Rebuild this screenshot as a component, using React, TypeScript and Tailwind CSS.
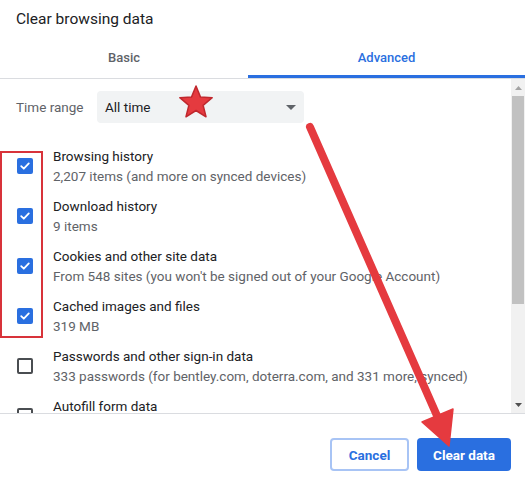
import React from "react";

type Item = { title: string; sub: string; checked: boolean };

const items: Item[] = [
  { title: "Browsing history", sub: "2,207 items (and more on synced devices)", checked: true },
  { title: "Download history", sub: "9 items", checked: true },
  { title: "Cookies and other site data", sub: "From 548 sites (you won't be signed out of your Google Account)", checked: true },
  { title: "Cached images and files", sub: "319 MB", checked: true },
  { title: "Passwords and other sign-in data", sub: "333 passwords (for bentley.com, doterra.com, and 331 more, synced)", checked: false },
  { title: "Autofill form data", sub: "\u00a0", checked: false },
];

function Checkbox({ checked }: { checked: boolean }) {
  if (checked) {
    return (
      <div className="w-[16px] h-[16px] rounded-[2px] bg-[#2a6fe0] flex items-center justify-center shrink-0">
        <svg width="12" height="12" viewBox="0 0 12 12">
          <path d="M2.2 6.2 L4.8 8.7 L9.8 3.4" fill="none" stroke="white" strokeWidth="1.8" strokeLinecap="round" strokeLinejoin="round" />
        </svg>
      </div>
    );
  }
  return <div className="w-[16px] h-[16px] rounded-[2px] border-2 border-[#4a4d51] shrink-0" />;
}

export default function App() {
  return (
    <div
      className="relative w-[525px] h-[479px] overflow-hidden bg-white"
      style={{ fontFamily: "Roboto, 'Liberation Sans', Arial, sans-serif" }}
    >
      {/* Title */}
      <div className="h-[40px] flex items-center pl-[16px] text-[15.5px] text-[#202124]">Clear browsing data</div>

      {/* Tabs */}
      <div className="flex h-[39px] border-b border-[#dadce0]">
        <div className="w-[248px] flex items-center justify-center text-[13px] font-medium text-[#5f6368] pb-[2px]">Basic</div>
        <div className="flex-1 flex items-center justify-center text-[13px] font-medium text-[#2a6fe0] border-b-[3px] border-[#2a6fe0] pt-[1px]">
          Advanced
        </div>
      </div>

      {/* Scroll area */}
      <div className="flex h-[335px] border-b border-[#dadce0]">
        <div className="flex-1 overflow-hidden">
          <div className="flex items-center pt-[12px] pl-[16px]">
            <span className="text-[13.5px] text-[#5f6368] w-[81px]">Time range</span>
            <div className="w-[207px] h-[32px] rounded-[4px] bg-[#f1f3f4] flex items-center justify-between pl-[8px] pr-[8px]">
              <span className="text-[13.5px] text-[#202124]">All time</span>
              <svg width="10" height="5" viewBox="0 0 10 5">
                <path d="M0 0 L10 0 L5 5 Z" fill="#5f6368" />
              </svg>
            </div>
          </div>
          <div className="pt-[18px]">
            {items.map((it) => (
              <div key={it.title} className="h-[50px] flex items-center">
                <div className="w-[53px] pl-[17px] flex">
                  <Checkbox checked={it.checked} />
                </div>
                <div className="flex flex-col">
                  <span className="text-[13.5px] leading-[20px] text-[#202124] whitespace-nowrap">{it.title}</span>
                  <span className="text-[13.5px] leading-[20px] text-[#5f6368] whitespace-nowrap">{it.sub}</span>
                </div>
              </div>
            ))}
          </div>
        </div>
        {/* Scrollbar */}
        <div className="w-[14px] bg-[#f1f1f1] flex flex-col">
          <div className="h-[17px] flex items-center justify-center">
            <svg width="7" height="4" viewBox="0 0 7 4">
              <path d="M0 4 L7 4 L3.5 0 Z" fill="#a3a3a3" />
            </svg>
          </div>
          <div className="mx-[1px] h-[208px] bg-[#c1c1c1]" />
          <div className="flex-1" />
          <div className="h-[17px] flex items-center justify-center">
            <svg width="7" height="4" viewBox="0 0 7 4">
              <path d="M0 0 L7 0 L3.5 4 Z" fill="#505050" />
            </svg>
          </div>
        </div>
      </div>

      {/* Footer */}
      <div className="flex justify-end gap-[8px] pt-[24px] pr-[14px]">
        <button className="w-[79px] h-[33px] rounded-[4px] border-2 border-[#a8c4f5] bg-white text-[13.5px] font-bold text-[#2a6fe0] pt-[1px]">
          Cancel
        </button>
        <button className="w-[94px] h-[33px] rounded-[4px] bg-[#2a6fe0] text-[13.5px] font-bold text-white pt-[1px]">
          Clear data
        </button>
      </div>

      {/* Annotations */}
      <div className="absolute left-0 top-[151px] w-[43px] h-[187px] border-[2.5px] border-[#d8333a]" />
      <svg className="absolute left-0 top-0 pointer-events-none" width="525" height="479" viewBox="0 0 525 479">
        <polygon
          points="196,86 200.4,96.9 212.2,97.7 203.1,105.3 206,116.8 196,110.5 186,116.8 188.9,105.3 179.8,97.7 191.6,96.9"
          fill="#e53a3f"
          stroke="#c0282e"
          strokeWidth="1.5"
          strokeLinejoin="round"
        />
        <line x1="310" y1="127" x2="438" y2="418" stroke="#e53a3f" strokeWidth="8" strokeLinecap="round" />
        <polygon points="422,422 453,409 449,446" fill="#e53a3f" stroke="#e53a3f" strokeWidth="1.5" strokeLinejoin="round" />
      </svg>
    </div>
  );
}
